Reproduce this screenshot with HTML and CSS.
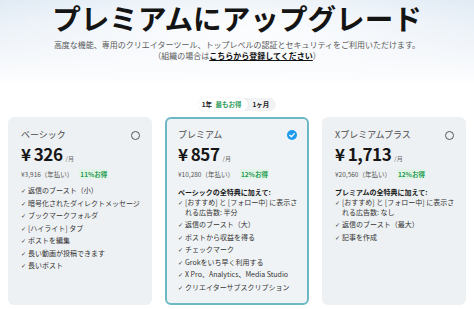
FILE: index.html
```html
<!DOCTYPE html>
<html lang="ja">
<head>
    <meta charset="UTF-8">
    <meta name="viewport" content="width=device-width, initial-scale=1.0">
    <title>プレミアムにアップグレード</title>
    <link rel="stylesheet" href="styles.css">
</head>
<body>
    <header class="hero">
        <h1>プレミアムにアップグレード</h1>
        <p class="lead">
            高度な機能、専用のクリエイターツール、トップレベルの認証とセキュリティをご利用いただけます。<br>
            （組織の場合は<a href="#">こちらから登録してください</a>）
        </p>
    </header>

    <div class="period">
        <div class="period-toggle">
            <span class="period-option active">1年 <em>最もお得</em></span>
            <span class="period-option">1ヶ月</span>
        </div>
    </div>

    <main class="plans">
        <section class="plan">
            <div class="plan-head">
                <h2>ベーシック</h2>
                <span class="radio"></span>
            </div>
            <div class="price"><span class="yen">¥</span>326<span class="per">/月</span></div>
            <div class="annual">¥3,916（年払い）<span class="save">11%お得</span></div>
            <ul class="features">
                <li>返信のブースト（小）</li>
                <li>暗号化されたダイレクトメッセージ</li>
                <li>ブックマークフォルダ</li>
                <li>[ハイライト] タブ</li>
                <li>ポストを編集</li>
                <li>長い動画が投稿できます</li>
                <li>長いポスト</li>
            </ul>
        </section>

        <section class="plan selected">
            <div class="plan-head">
                <h2>プレミアム</h2>
                <span class="radio checked">
                    <svg viewBox="0 0 10 10" width="10" height="10"><path d="M2.8 5.2 L4.4 6.7 L7.3 3.6" fill="none" stroke="#fff" stroke-width="1.3" stroke-linecap="round" stroke-linejoin="round"/></svg>
                </span>
            </div>
            <div class="price"><span class="yen">¥</span>857<span class="per">/月</span></div>
            <div class="annual">¥10,280（年払い）<span class="save">12%お得</span></div>
            <p class="includes">ベーシックの全特典に加えて:</p>
            <ul class="features">
                <li class="long">[おすすめ] と [フォロー中] に表示さ<br>れる広告数: 半分</li>
                <li>返信のブースト（大）</li>
                <li>ポストから収益を得る</li>
                <li>チェックマーク</li>
                <li>Grokをいち早く利用する</li>
                <li>X Pro、Analytics、Media Studio</li>
                <li>クリエイターサブスクリプション</li>
            </ul>
        </section>

        <section class="plan">
            <div class="plan-head">
                <h2>Xプレミアムプラス</h2>
                <span class="radio"></span>
            </div>
            <div class="price"><span class="yen">¥</span>1,713<span class="per">/月</span></div>
            <div class="annual">¥20,560（年払い）<span class="save">12%お得</span></div>
            <p class="includes">プレミアムの全特典に加えて:</p>
            <ul class="features">
                <li class="long">[おすすめ] と [フォロー中] に表示さ<br>れる広告数: なし</li>
                <li>返信のブースト（最大）</li>
                <li>記事を作成</li>
            </ul>
        </section>
    </main>
</body>
</html>
```

FILE: styles.css
```css
body {
    margin: 0;
    font-family: 'Noto Sans CJK JP', 'Noto Sans', sans-serif;
    color: #222;
    background:
        radial-gradient(ellipse 300px 70px at 50% 30px, rgba(255, 255, 255, 0.9), rgba(255, 255, 255, 0)),
        linear-gradient(to bottom, #dde8f3 0, #eef3f9 45px, #ffffff 85px);
    background-repeat: no-repeat;
    height: 309px;
    overflow: hidden;
}

.hero {
    text-align: center;
}

.hero h1 {
    margin: 0;
    font-size: 28.6px;
    line-height: 35px;
    font-weight: 700;
    color: #141414;
}

.lead {
    margin: 5px 0 0;
    font-size: 8px;
    line-height: 10.5px;
    color: #5a5a5a;
}

.lead a {
    color: #111;
    font-weight: 700;
}

.period {
    display: flex;
    justify-content: center;
    margin-top: 37px;
}

.period-toggle {
    display: flex;
    align-items: center;
    background: #f1f2f3;
    border-radius: 7px;
    height: 13px;
}

.period-option {
    font-size: 6.5px;
    font-weight: 700;
    color: #1a1a1a;
    padding: 0 7px 0 4px;
    line-height: 13px;
    border-radius: 7px;
}

.period-option.active {
    background: #fff;
    box-shadow: 0 0 2px rgba(0, 0, 0, 0.08);
}

.period-option em {
    font-style: normal;
    color: #2e9b5c;
    margin-left: 2px;
}

.plans {
    display: grid;
    grid-template-columns: repeat(3, 1fr);
    gap: 13px;
    padding: 0 8px;
    margin-top: 6px;
}

.plan {
    height: 188px;
    box-sizing: border-box;
    background: #eef1f3;
    border: 2px solid transparent;
    border-radius: 6px;
    padding: 10px 7px 10px 11px;
}

.plan.selected {
    border-color: #6cb9c5;
    background: #f0f3f5;
}

.plan-head {
    display: flex;
    justify-content: space-between;
    align-items: center;
}

.plan-head h2 {
    margin: 0;
    font-size: 9px;
    line-height: 12px;
    font-weight: 400;
    color: #4a4a4a;
}

.radio {
    width: 9px;
    height: 9px;
    box-sizing: border-box;
    border: 1px solid #555;
    border-radius: 50%;
    margin-right: 3px;
}

.radio.checked {
    width: 10px;
    height: 10px;
    border: none;
    background: #1d9bf0;
    display: flex;
}

.price {
    font-size: 17px;
    font-weight: 700;
    line-height: 22px;
    color: #161616;
    letter-spacing: -0.4px;
    margin-top: 2px;
}

.price .yen {
    margin-right: 3px;
}

.price .per {
    font-size: 6px;
    font-weight: 400;
    color: #666;
    margin-left: 3px;
    letter-spacing: 0;
}

.annual {
    font-size: 6.5px;
    line-height: 9px;
    color: #555;
}

.save {
    font-weight: 700;
    color: #1f9a52;
    background: #e2f4e8;
    padding: 0 1px;
    margin-left: 6px;
}

.includes {
    margin: 8px 0 0;
    font-size: 7px;
    line-height: 10px;
    font-weight: 700;
    color: #1a1a1a;
}

.features {
    list-style: none;
    margin: 7px 0 0;
    padding: 0;
    display: flex;
    flex-direction: column;
    gap: 3px;
}

.includes + .features {
    margin-top: 1px;
}

.features li {
    position: relative;
    padding-left: 7px;
    font-size: 7px;
    line-height: 9.5px;
    color: #333;
}

.features li.long {
    white-space: nowrap;
}

.features li::before {
    content: "✓";
    position: absolute;
    left: 0;
    top: 0;
    font-family: 'DejaVu Sans', sans-serif;
    font-size: 6px;
    color: #333;
}
```
